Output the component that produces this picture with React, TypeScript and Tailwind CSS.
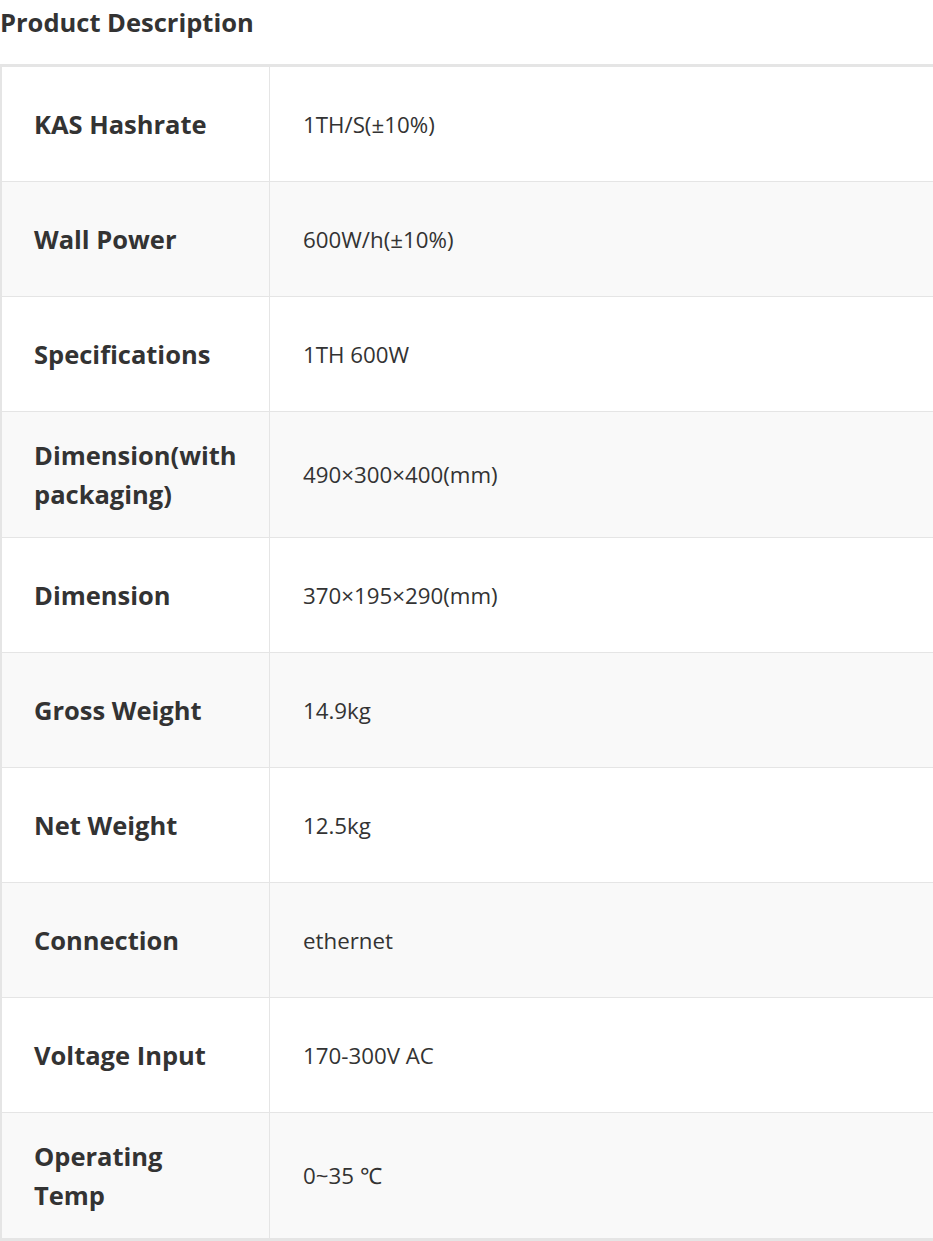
const specs: { label: string[]; value: string }[] = [
  { label: ["KAS Hashrate"], value: "1TH/S(±10%)" },
  { label: ["Wall Power"], value: "600W/h(±10%)" },
  { label: ["Specifications"], value: "1TH 600W" },
  { label: ["Dimension(with", "packaging)"], value: "490×300×400(mm)" },
  { label: ["Dimension"], value: "370×195×290(mm)" },
  { label: ["Gross Weight"], value: "14.9kg" },
  { label: ["Net Weight"], value: "12.5kg" },
  { label: ["Connection"], value: "ethernet" },
  { label: ["Voltage Input"], value: "170-300V AC" },
  { label: ["Operating", "Temp"], value: "0~35 ℃" },
];

export default function App() {
  return (
    <div className="min-h-screen bg-white font-['Open_Sans',sans-serif] text-[#333]">
      <h2 className="pt-[3px] mb-[22px] text-[25.5px] font-bold leading-[39px]">
        Product Description
      </h2>
      <div className="border-t-[3px] border-l-2 border-b-[3px] border-[#e5e5e5]">
        {specs.map((row, i) => (
          <div
            key={row.value}
            className={`grid min-h-[115px] grid-cols-[268px_1fr] ${
              i % 2 === 1 ? "bg-[#f9f9f9]" : "bg-white"
            } ${i < specs.length - 1 ? "border-b border-[#e5e5e5]" : ""}`}
          >
            <div className="flex items-center border-r border-[#e5e5e5] py-[23.5px] pl-[32px] pr-[20px] text-[25.5px] font-bold leading-[39px]">
              <span>
                {row.label.map((line, j) => (
                  <span key={line}>
                    {j > 0 && <br />}
                    {line}
                  </span>
                ))}
              </span>
            </div>
            <div className="flex items-center px-[33px] text-[22.3px] leading-[33px]">
              {row.value}
            </div>
          </div>
        ))}
      </div>
    </div>
  );
}
